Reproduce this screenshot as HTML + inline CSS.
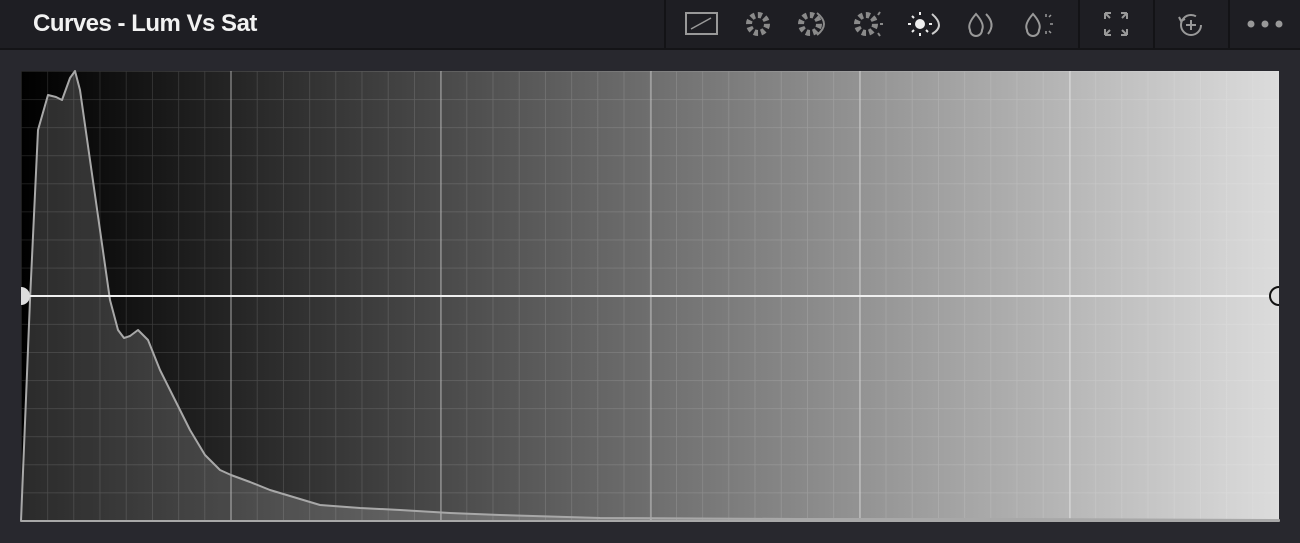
<!DOCTYPE html>
<html><head><style>
body{margin:0;width:1300px;height:543px;background:#28282e;overflow:hidden;font-family:"Liberation Sans",sans-serif;position:relative}
.hdr{position:absolute;left:0;top:0;width:1300px;height:48px;background:#1e1e23;border-bottom:2px solid #141417}
.title{position:absolute;left:33px;top:10px;color:#f2f2f2;font-size:24px;font-weight:bold;letter-spacing:-0.5px}
.sep{position:absolute;top:0;width:2px;height:48px;background:#131316}
</style></head><body>
<div class="hdr">
<div class="title">Curves - Lum Vs Sat</div>
<div class="sep" style="left:664px"></div>
<div class="sep" style="left:1078px"></div>
<div class="sep" style="left:1153px"></div>
<div class="sep" style="left:1228px"></div>
<svg width="1300" height="48" style="position:absolute;left:0;top:0" fill="none" stroke-linecap="butt">
<rect x="686" y="13" width="31" height="21" stroke="#999" stroke-width="2"/>
<line x1="691" y1="29" x2="711" y2="18" stroke="#999" stroke-width="1.5"/>
<circle cx="758" cy="24" r="9" stroke="#8a8a8a" stroke-width="6" stroke-dasharray="4 3"/>
<circle cx="810" cy="24" r="9" stroke="#8a8a8a" stroke-width="6" stroke-dasharray="4 3"/>
<circle cx="866" cy="24" r="9" stroke="#8a8a8a" stroke-width="6" stroke-dasharray="4 3"/>
<path d="M817 13 q14 11 0 22" stroke="#8a8a8a" stroke-width="2"/>
<path d="M878 15 l2 -3 M880 24 h3 M878 33 l2 3" stroke="#8a8a8a" stroke-width="2"/>
<circle cx="920" cy="24" r="5" fill="#eee"/>
<path d="M920 12v3M920 33v3M908 24h3M929 24h3M912 16l2 2M926 30l2 2M912 32l2-2" stroke="#eee" stroke-width="2"/>
<path d="M932 14 q14 12 0 20" stroke="#ccc" stroke-width="2"/>
<path d="M976 14 q-9 10 -6 16 a6 6 0 0 0 12 0 q3-6 -6-16z" stroke="#999" stroke-width="2"/>
<path d="M986 14 q10 10 2 20" stroke="#999" stroke-width="2"/>
<path d="M1033 14 q-9 10 -6 16 a6 6 0 0 0 12 0 q3-6 -6-16z" stroke="#999" stroke-width="2"/>
<path d="M1046 14v3M1046 31v3M1050 24h3M1049 17l2-2M1049 31l2 2" stroke="#999" stroke-width="1.5"/>
<path d="M1105 13h6M1105 13v6M1105 13l5 5M1127 13h-6M1127 13v6M1127 13l-5 5M1105 35h6M1105 35v-6M1105 35l5-5M1127 35h-6M1127 35v-6M1127 35l-5-5" stroke="#999" stroke-width="2"/>
<circle cx="1191" cy="25" r="10" stroke="#999" stroke-width="2" stroke-dasharray="52 12"/>
<path d="M1191 20v10M1186 25h10M1179 17l2 4 4-2" stroke="#999" stroke-width="2"/>
<g fill="#999"><circle cx="1251" cy="24" r="3.5"/><circle cx="1265" cy="24" r="3.5"/><circle cx="1279" cy="24" r="3.5"/></g>
</svg>
</div>
<svg width="1300" height="543" style="position:absolute;left:0;top:0">
<defs><linearGradient id="g" x1="0" x2="1"><stop offset="0" stop-color="#000"/><stop offset="1" stop-color="#dcdcdc"/></linearGradient>
<pattern id="p" x="21" y="71" width="26.2" height="28.1" patternUnits="userSpaceOnUse"><path d="M0 0V28.1M0 0H26.2" stroke="rgba(255,255,255,0.15)" stroke-width="1.5" fill="none"/></pattern></defs>
<rect x="21" y="71" width="1258" height="450" fill="url(#g)"/>
<rect x="21" y="71" width="1258" height="450" fill="url(#p)"/>
<g stroke="rgba(255,255,255,0.35)" stroke-width="1.5">
<line x1="231" y1="71" x2="231" y2="521"/><line x1="441" y1="71" x2="441" y2="521"/><line x1="651" y1="71" x2="651" y2="521"/><line x1="860" y1="71" x2="860" y2="521"/><line x1="1070" y1="71" x2="1070" y2="521"/></g>
<path d="M21 521 L30 300 L38 130 L48 95 L56 97 L62 100 L70 78 L75 71 L80 90 L90 160 L100 230 L110 300 L118 330 L124 338 L130 336 L138 330 L148 340 L160 370 L175 400 L190 430 L205 455 L220 470 L231 475 L250 482 L270 490 L290 496 L320 505 L360 508 L400 510 L450 513 L500 515 L600 518 L800 519 L1000 519 L1279 520 L1279 521 Z" fill="rgba(255,255,255,0.17)" stroke="#a8a8a8" stroke-width="2" stroke-linejoin="round"/>
<line x1="21" y1="296" x2="1279" y2="296" stroke="#f0f0f0" stroke-width="2"/>
<path d="M21 287 a9 9 0 0 1 0 18z" fill="#ddd"/>
<path d="M1279 287 a9 9 0 0 0 0 18" fill="#ddd" stroke="#111" stroke-width="2"/>
</svg>
</body></html>
